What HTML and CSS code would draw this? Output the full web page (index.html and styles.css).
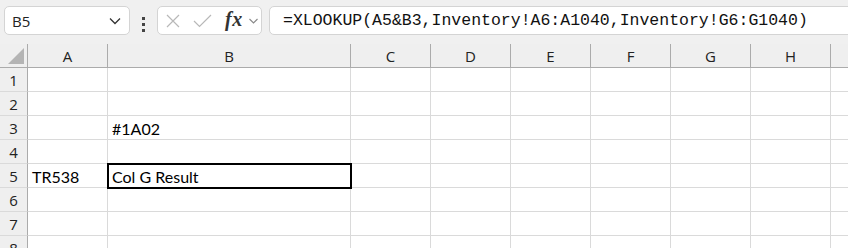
FILE: index.html
```html
<!DOCTYPE html>
<html lang="en">
<head>
  <meta charset="UTF-8" />
  <title>Sheet – B5</title>
  <link rel="stylesheet" href="styles.css">
</head>
<body>
  <div class="formula-bar">
    <div class="namebox">
      <span>B5</span>
      <svg class="chev" width="12" height="8" viewBox="0 0 12 8"><path d="M1 1.5 L6 6.5 L11 1.5" fill="none" stroke="#333" stroke-width="1.3"/></svg>
    </div>
    <div class="dots"><i></i><i></i><i></i></div>
    <div class="fxbox">
      <svg class="ico" width="14" height="14" viewBox="0 0 14 14"><path d="M1 1 L13 13 M13 1 L1 13" stroke="#b8b8b8" stroke-width="1.2" fill="none"/></svg>
      <svg class="ico" width="19" height="14" viewBox="0 0 19 14"><path d="M1 7 L6.5 12.5 L18 1" stroke="#b8b8b8" stroke-width="1.2" fill="none"/></svg>
      <span class="fx">fx</span>
      <svg class="chev-sm" width="9" height="6" viewBox="0 0 9 6"><path d="M0.5 1 L4.5 5 L8.5 1" fill="none" stroke="#888" stroke-width="1.1"/></svg>
    </div>
    <div class="formula">=XLOOKUP(A5&amp;B3,Inventory!A6:A1040,Inventory!G6:G1040)</div>
  </div>

  <div class="sheet">
    <div class="hd corner"><span class="tri"></span></div>
    <div class="hd col">A</div>
    <div class="hd col">B</div>
    <div class="hd col">C</div>
    <div class="hd col">D</div>
    <div class="hd col">E</div>
    <div class="hd col">F</div>
    <div class="hd col">G</div>
    <div class="hd col">H</div>
    <div class="hd col"></div>

    <div class="hd row">1</div>
    <div class="c"></div><div class="c"></div><div class="c"></div><div class="c"></div><div class="c"></div><div class="c"></div><div class="c"></div><div class="c"></div><div class="c"></div>

    <div class="hd row">2</div>
    <div class="c"></div><div class="c"></div><div class="c"></div><div class="c"></div><div class="c"></div><div class="c"></div><div class="c"></div><div class="c"></div><div class="c"></div>

    <div class="hd row">3</div>
    <div class="c"></div><div class="c">#1A02</div><div class="c"></div><div class="c"></div><div class="c"></div><div class="c"></div><div class="c"></div><div class="c"></div><div class="c"></div>

    <div class="hd row">4</div>
    <div class="c"></div><div class="c"></div><div class="c"></div><div class="c"></div><div class="c"></div><div class="c"></div><div class="c"></div><div class="c"></div><div class="c"></div>

    <div class="hd row">5</div>
    <div class="c">TR538</div><div class="c selected">Col G Result</div><div class="c"></div><div class="c"></div><div class="c"></div><div class="c"></div><div class="c"></div><div class="c"></div><div class="c"></div>

    <div class="hd row">6</div>
    <div class="c"></div><div class="c"></div><div class="c"></div><div class="c"></div><div class="c"></div><div class="c"></div><div class="c"></div><div class="c"></div><div class="c"></div>

    <div class="hd row">7</div>
    <div class="c"></div><div class="c"></div><div class="c"></div><div class="c"></div><div class="c"></div><div class="c"></div><div class="c"></div><div class="c"></div><div class="c"></div>

    <div class="hd row">8</div>
    <div class="c"></div><div class="c"></div><div class="c"></div><div class="c"></div><div class="c"></div><div class="c"></div><div class="c"></div><div class="c"></div><div class="c"></div>
  </div>
</body>
</html>
```

FILE: styles.css
```css
:root {
  --bar: #f0f0f0;
  --head: #efefef;
  --grid: #dadada;
  --headline: #ababab;
  --text: #000;
}
* {
  box-sizing: border-box;
}
body {
  margin: 0;
  width: 848px;
  height: 248px;
  overflow: hidden;
  background: var(--bar);
  font-family: "Open Sans", sans-serif;
}

/* formula bar */
.formula-bar {
  display: flex;
  height: 44px;
  padding: 6px 0 0 4px;
}
.formula-bar > * {
  flex: none;
}
.namebox, .fxbox, .formula {
  height: 29px;
  background: #fff;
  border: 1px solid #d4d4d4;
  border-radius: 5px;
  display: flex;
  align-items: center;
}
.namebox {
  width: 126px;
  padding: 0 7px 0 7px;
  justify-content: space-between;
  font-size: 15px;
  color: #222;
}
.namebox .chev {
  margin-right: 1px;
}
.dots {
  width: 27px;
  display: flex;
  flex-direction: column;
  align-items: center;
  justify-content: center;
  gap: 3px;
  padding-bottom: 1px;
}
.dots i {
  width: 3px;
  height: 3px;
  background: #444;
}
.fxbox {
  width: 105px;
  padding-left: 8px;
}
.fxbox .ico {
  margin-right: 13px;
}
.fx {
  font-family: "Liberation Serif", serif;
  font-style: italic;
  font-weight: bold;
  font-size: 20px;
  color: #333;
  letter-spacing: 0.5px;
  margin-top: -3px;
  margin-right: 6px;
}
.chev-sm {
  margin-top: 1px;
}
.formula {
  width: 640px;
  margin-left: 7px;
  padding-left: 13px;
  font-family: "Liberation Mono", monospace;
  font-size: 16.5px;
  color: #111;
  white-space: nowrap;
}

/* sheet */
.sheet {
  display: grid;
  grid-template-columns: 28px 80px 243px repeat(6, 80px) 60px;
  grid-auto-rows: 24px;
  background: #fff;
}
.hd {
  background: var(--head);
  color: #222;
  font-size: 15px;
  display: flex;
  align-items: center;
  justify-content: center;
}
.col {
  border-right: 1px solid var(--headline);
  border-bottom: 1px solid var(--headline);
}
.corner {
  position: relative;
  border-right: 1px solid var(--headline);
  border-bottom: 1px solid var(--headline);
}
.corner .tri {
  position: absolute;
  right: 3px;
  bottom: 3px;
  width: 0;
  height: 0;
  border-left: 16px solid transparent;
  border-bottom: 16px solid #b4b4b4;
}
.row {
  border-right: 1px solid var(--headline);
  border-bottom: 1px solid var(--grid);
  padding-top: 1px;
}
.c {
  border-right: 1px solid var(--grid);
  border-bottom: 1px solid var(--grid);
  font-family: "Lato", sans-serif;
  font-size: 16px;
  color: var(--text);
  padding: 1px 0 0 4px;
  display: flex;
  align-items: center;
  white-space: nowrap;
}
.selected {
  position: relative;
  z-index: 1;
  outline: 2px solid #000;
  outline-offset: -1px;
}
```
